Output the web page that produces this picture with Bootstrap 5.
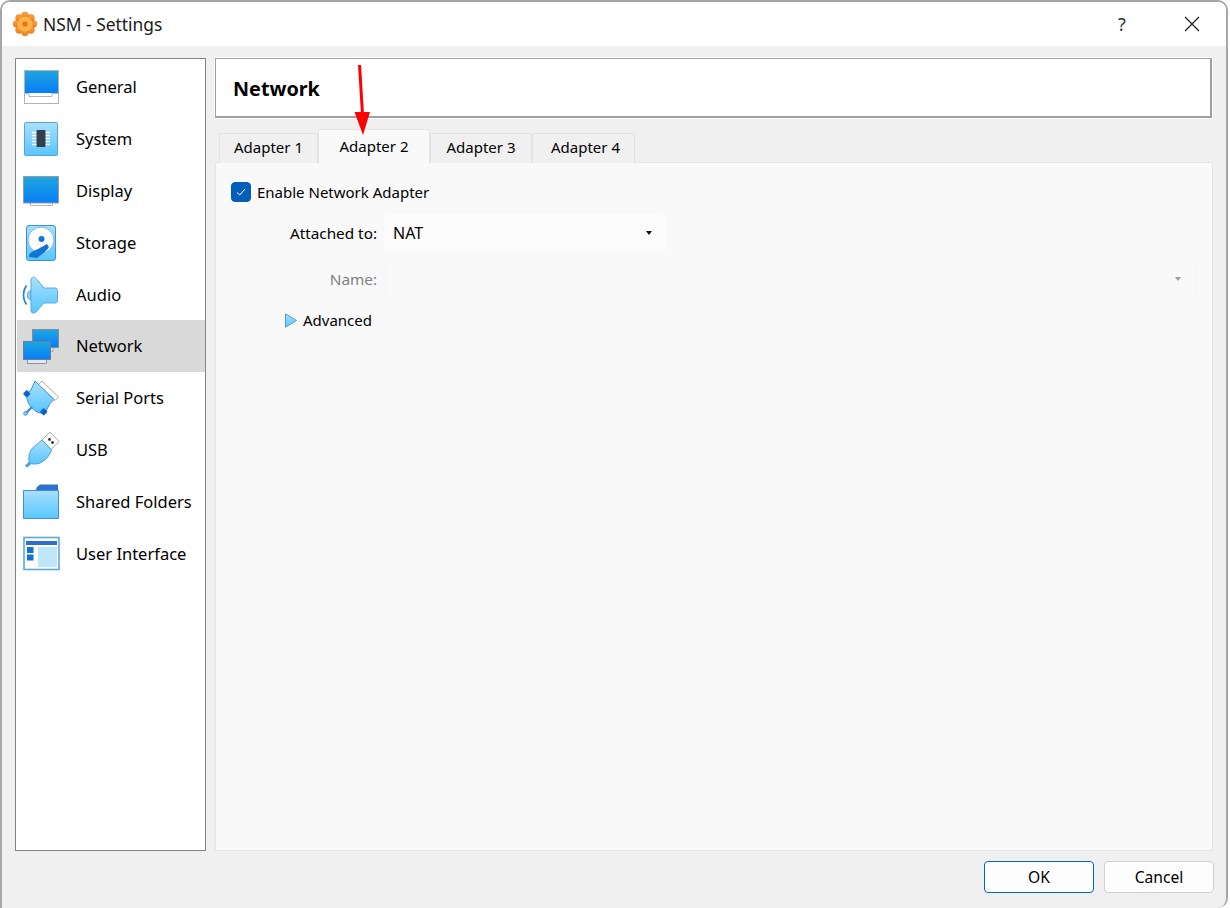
<!DOCTYPE html>
<html lang="en">
<head>
<meta charset="UTF-8">
<title>NSM - Settings</title>
<link href="https://cdn.jsdelivr.net/npm/bootstrap@5.3.3/dist/css/bootstrap.min.css" rel="stylesheet">
<style>
html, body { margin: 0; height: 908px; overflow: hidden; background: #fff; }
body, .btn { font-family: "Noto Sans", "Liberation Sans", sans-serif; font-size: 16.5px; color: #000; }
.vb-window { position: relative; height: 908px; width: 1228px; background: #f0f0f0; border: 2px solid #a6a6a6; border-bottom: 0; border-radius: 10px 10px 10px 0; overflow: hidden; }
.vb-title { height: 44px; background: #fff; padding-left: 10px; }
.vb-title svg { margin-right: 5px; }
.vb-title-text { font-size: 17.4px; color: #1a1a1a; }
.vb-help { width: 38px; color: #333; font-size: 18px; margin-right: 43px; }
.vb-title .vb-close { margin-right: 26px; }
.vb-main { padding: 12px 0 0 13px; gap: 9px; }
.vb-side { width: 191px; height: 793px; background: #fff; border: 1px solid #83838f; padding: 2px 0 0 1px; border-radius: 0; }
.vb-side .list-group-item { height: 52px; border: 0; border-radius: 0; padding: 0 0 0 5px; background: transparent; color: #000; gap: 16px; }
.vb-side .list-group-item.active { background: #d9d9d9; color: #000; }
.vb-side svg { flex: none; }
.vb-right { width: 998px; }
.vb-head { height: 60px; width: 997px; background: #fff; border: 1px solid #a0a0a0; border-width: 1px 2px 2px 1px; outline: 1px solid #fff; padding-left: 17px; font-weight: 700; font-size: 19.8px; line-height: 60px; }
.vb-tabs { margin: 11px 0 0 4px; border: 0; height: 34px; align-items: flex-end; position: relative; z-index: 1; }
.vb-tabs .nav-link { height: 30px; margin: 0; padding: 0; width: 99px; text-align: center; line-height: 26px; color: #000; background: #f0f0f0; border: 1px solid #e3e3e3; border-bottom: 0; border-radius: 2px 2px 0 0; font-size: 15px; }
.vb-tabs .nav-link.active { height: 35px; width: 112px; line-height: 32px; background: #f9f9f9; color: #000; border-color: #e3e3e3; position: relative; top: 1px; }
.vb-tabs .nav-item:nth-child(3) .nav-link { width: 102px; }
.vb-tabs .nav-item:nth-child(4) .nav-link { width: 103px; padding-left: 4px; }
.vb-panel { height: 689px; width: 998px; background: #f9f9f9; border: 1px solid #e5e5e5; padding: 19px 15px 0 15px; margin-top: -1px; font-size: 15px; }
.vb-check { width: 20px; height: 20px; margin: 0 6px 0 0; background-color: #005fb8; border: 1px solid #005fb8; border-radius: 4px; }
.vb-check-row { height: 20px; }
.vb-form-row { height: 38px; margin-top: 12px; }
.vb-form-row + .vb-form-row { margin-top: 8px; }
.vb-field-label { width: 146px; text-align: right; margin-right: 8px; font-size: 15.3px; }
.vb-muted { color: #808080; }
.vb-combo { width: 281px; height: 38px; background: #fcfcfc; padding: 0 14px 0 8px; border-radius: 4px; font-size: 16px; }
.vb-combo-off { width: 811px; background: transparent; border-left: 1px dotted #f0f0f0; border-right: 1px dotted #f0f0f0; }
.vb-caret { width: 0; height: 0; border: 3.5px solid transparent; border-top: 4px solid #111; border-bottom: 0; }
.vb-caret-off { border-top-color: #9a9a9a; }
.vb-advanced { margin: 11px 0 0 54px; height: 22px; gap: 6px; }
.vb-foot { padding: 10px 12px 0 0; gap: 10px; }
.vb-btn { width: 110px; height: 32px; padding: 0; background: #fdfdfd; border: 1px solid #d0d0d0; border-radius: 4px; color: #000; font-size: 15.6px; line-height: 28px; }
.vb-btn-main { border: 1px solid #0067c0; }
.vb-arrow { position: absolute; left: 340px; top: 60px; z-index: 5; }
</style>
</head>
<body>
<svg width="0" height="0" class="position-absolute">
  <defs>
    <linearGradient id="gScreen" x1="0" y1="0" x2="0" y2="1"><stop offset="0" stop-color="#1fa6dd"/><stop offset="1" stop-color="#067dfa"/></linearGradient>
    <linearGradient id="gLight" x1="0" y1="0" x2="0" y2="1"><stop offset="0" stop-color="#a8e0fb"/><stop offset="1" stop-color="#58c6ff"/></linearGradient>
    <linearGradient id="gGear" x1="0" y1="0" x2="0" y2="1"><stop offset="0" stop-color="#f9a63c"/><stop offset="1" stop-color="#ec7f22"/></linearGradient>
  </defs>
</svg>

<div class="vb-window">
  <div class="vb-title d-flex align-items-center">
    <svg width="26" height="26" viewBox="0 0 26 26">
      <g fill="url(#gGear)" stroke="#e8802a" stroke-width=".6">
        <circle cx="13" cy="13" r="9.5"/>
        <circle cx="13" cy="4.5" r="3.4"/><circle cx="13" cy="21.5" r="3.4"/><circle cx="4.5" cy="13" r="3.4"/><circle cx="21.5" cy="13" r="3.4"/>
        <circle cx="7" cy="7" r="3.4"/><circle cx="19" cy="7" r="3.4"/><circle cx="7" cy="19" r="3.4"/><circle cx="19" cy="19" r="3.4"/>
      </g>
      <circle cx="13" cy="13" r="7.5" fill="#fbb34a"/>
      <circle cx="13" cy="13" r="2.6" fill="#e8701f"/>
    </svg>
    <span class="vb-title-text">NSM - Settings</span>
    <span class="vb-help ms-auto text-center">?</span>
    <svg class="vb-close" width="16" height="16" viewBox="0 0 16 16"><path d="M1 1 15 15M15 1 1 15" stroke="#222" stroke-width="1.3" fill="none"/></svg>
  </div>

  <div class="vb-main d-flex">
    <div class="vb-side list-group">
      <div class="list-group-item d-flex align-items-center">
        <svg width="38" height="38" viewBox="0 0 38 38"><rect x="2.5" y="2.5" width="34" height="33" fill="#fff" stroke="#b4b4b4"/><rect x="3" y="3" width="33" height="22" fill="url(#gScreen)"/><path d="M3 25.5H7V28.5H30V25.5H36" fill="none" stroke="#b4b4b4"/></svg>
        <span>General</span>
      </div>
      <div class="list-group-item d-flex align-items-center">
        <svg width="38" height="38" viewBox="0 0 38 38"><rect x="2.5" y="2.5" width="33" height="33" rx="1" fill="url(#gLight)" stroke="#5f9fdc"/><path d="M10 12.5H28M10 15.5H28M10 18.5H28M10 21.5H28M10 24.5H28" stroke="#fff" stroke-width="1.6"/><rect x="14.5" y="10" width="9" height="17" rx="1" fill="#343f4e"/></svg>
        <span>System</span>
      </div>
      <div class="list-group-item d-flex align-items-center">
        <svg width="38" height="38" viewBox="0 0 38 38"><path d="M8.5 30V33.500H30.500V30" fill="#fff" stroke="#b4b4b4"/><rect x="1.5" y="4.500" width="35" height="26.500" fill="url(#gScreen)" stroke="#9a9a9a"/></svg>
        <span>Display</span>
      </div>
      <div class="list-group-item d-flex align-items-center">
        <svg width="38" height="38" viewBox="0 0 38 38"><rect x="4.5" y="1.5" width="29" height="35" rx="2.5" fill="url(#gLight)" stroke="#3f8fe0"/><circle cx="19" cy="16" r="13" fill="#fff" stroke="#6fb9ee"/><circle cx="19.5" cy="15" r="3" fill="#1273d6"/><path d="M7 33 C7 28 12 27 16 25 L25 20 L27 23 C24 28 19 31 15 34 Z" fill="#1273d6"/></svg>
        <span>Storage</span>
      </div>
      <div class="list-group-item d-flex align-items-center">
        <svg width="38" height="38" viewBox="0 0 38 38"><path d="M4.500 9.500C.5 15 .5 23 4.500 28.500" fill="none" stroke="#2483dc" stroke-width="1.6"/><path d="M5.500 18.500C5.500 16 7 15 9 14.500V24C7 23.500 5.500 22 5.500 19.500Z" fill="#8ed5f8" stroke="#4d9fe0"/><path d="M9 3.500C9 1 12 0.500 14 2.500L22 12H33C34.500 12 35.500 13 35.500 14.500V25C35.500 26 34.500 27 33 27H22L14 36C12 38 9 37 9 35Z" fill="url(#gLight)" stroke="#5fa9e6"/></svg>
        <span>Audio</span>
      </div>
      <div class="list-group-item active d-flex align-items-center">
        <svg width="38" height="38" viewBox="0 0 38 38"><rect x="10.500" y="2.500" width="26" height="18" fill="url(#gScreen)" stroke="#7f8c9e"/><path d="M31 21V24.500H27" fill="#e6e6e6" stroke="#a8b0b8"/><rect x="1.500" y="14.500" width="27" height="18" fill="url(#gScreen)" stroke="#6a7f96"/><path d="M5.500 33V36.500H24.500V33" fill="#e6e6e6" stroke="#8696a6"/></svg>
        <span>Network</span>
      </div>
      <div class="list-group-item d-flex align-items-center">
        <svg width="38" height="38" viewBox="0 0 38 38"><path d="M20 2L36.500 18L33 21.500L16.500 5.500Z" fill="#fff" stroke="#a8a8a8"/><path d="M13 2L32 20.500L28 24.500L23 34C17 35 13 32 10 29C7 26 4 21 5 15L9 11Z" fill="url(#gLight)" stroke="#3f8fe0"/><path d="M10 28L4 34" stroke="#3f8fe0" stroke-width="2.400"/><circle cx="3.500" cy="34.500" r="1.800" fill="#8ed5f8" stroke="#3f8fe0"/><rect x="2" y="12" width="5.500" height="5.500" rx="1" transform="rotate(45 4.750 14.750)" fill="#0f62c8"/><rect x="19" y="30" width="5.500" height="5.500" rx="1" transform="rotate(45 21.750 32.750)" fill="#0f62c8"/></svg>
        <span>Serial Ports</span>
      </div>
      <div class="list-group-item d-flex align-items-center">
        <svg width="38" height="38" viewBox="0 0 38 38"><path d="M28 1L37 10.500L29 18.500L20 9Z" fill="#fff" stroke="#a8a8a8"/><circle cx="27.500" cy="8.500" r="1.400" fill="#333"/><circle cx="30.500" cy="11.500" r="1.400" fill="#333"/><path d="M20 9L29.500 19C28 24 24 29 19 31.500C15 33.500 10 33.500 7.500 32C6 27 7 22 10 17.500Z" fill="url(#gLight)" stroke="#4d9fe0"/><path d="M8 32L4 35.500" stroke="#4d9fe0" stroke-width="3"/></svg>
        <span>USB</span>
      </div>
      <div class="list-group-item d-flex align-items-center">
        <svg width="38" height="38" viewBox="0 0 38 38"><path d="M15 4L18 1.500H36V9H13Z" fill="#2e6fd0"/><path d="M1.500 7.500H36.500V35.500H1.500Z" fill="url(#gLight)" stroke="#3f8fe0"/></svg>
        <span>Shared Folders</span>
      </div>
      <div class="list-group-item d-flex align-items-center">
        <svg width="38" height="38" viewBox="0 0 38 38"><rect x="2" y="2.500" width="35" height="32" fill="#fff" stroke="#5aa7e6" stroke-width="1.600"/><rect x="4" y="6" width="31" height="4" fill="#2e6fd0"/><rect x="16" y="12" width="19" height="20" fill="#bfe7fb"/><rect x="5" y="12" width="6.500" height="6" fill="#1273d6"/><rect x="5" y="19.500" width="6.500" height="6" fill="#1273d6"/></svg>
        <span>User Interface</span>
      </div>
    </div>

    <div class="vb-right">
      <div class="vb-head">Network</div>
      <ul class="nav nav-tabs flex-nowrap vb-tabs">
        <li class="nav-item"><a class="nav-link" href="#">Adapter 1</a></li>
        <li class="nav-item"><a class="nav-link active" href="#">Adapter 2</a></li>
        <li class="nav-item"><a class="nav-link" href="#">Adapter 3</a></li>
        <li class="nav-item"><a class="nav-link" href="#">Adapter 4</a></li>
      </ul>
      <div class="vb-panel">
        <div class="vb-check-row d-flex align-items-center">
          <span class="vb-check d-flex align-items-center justify-content-center">
            <svg width="12" height="12" viewBox="0 0 12 12"><path d="M2 6.500 4.800 9 10 3" fill="none" stroke="#fff" stroke-width="1"/></svg>
          </span>
          <span>Enable Network Adapter</span>
        </div>
        <div class="vb-form-row d-flex align-items-center">
          <span class="vb-field-label">Attached to:</span>
          <div class="vb-combo d-flex align-items-center justify-content-between"><span>NAT</span><i class="vb-caret"></i></div>
        </div>
        <div class="vb-form-row d-flex align-items-center">
          <span class="vb-field-label vb-muted">Name:</span>
          <div class="vb-combo vb-combo-off d-flex align-items-center justify-content-end"><i class="vb-caret vb-caret-off"></i></div>
        </div>
        <div class="vb-advanced d-flex align-items-center">
          <svg width="12" height="15" viewBox="0 0 12 15"><path d="M.5 .8 11.500 7.500 .5 14.200Z" fill="url(#gLight)" stroke="#4d9fe0"/></svg>
          <span>Advanced</span>
        </div>
      </div>
    </div>
  </div>

  <div class="vb-foot d-flex justify-content-end">
    <button type="button" class="btn vb-btn vb-btn-main">OK</button>
    <button type="button" class="btn vb-btn">Cancel</button>
  </div>

  <svg class="vb-arrow" width="40" height="80" viewBox="0 0 40 80">
    <path d="M17.500 3 20.500 52" stroke="#ff0000" stroke-width="3" fill="none"/>
    <path d="M12.500 50H28L21 73Z" fill="#ff0000"/>
  </svg>
</div>
</body>
</html>
